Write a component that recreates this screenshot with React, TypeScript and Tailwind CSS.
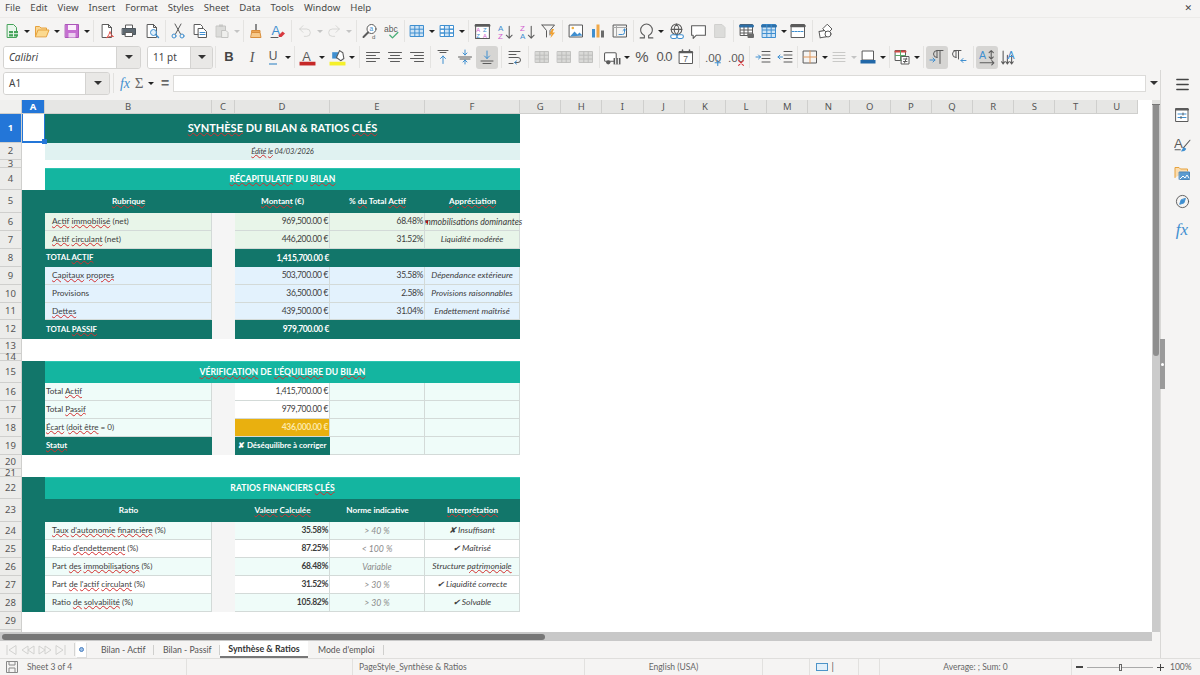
import type { ReactNode } from 'react';
import { Menu, Redo2, Undo2 } from 'lucide-react';

const BLUE = '#3f8fd0';
const DK = '#5b5b5b';
const sortTxt = 'Liberation Sans, sans-serif';

function I({ children, size = 16 }: { children: ReactNode; size?: number }) {
    return (
        <svg width={size} height={size} viewBox="0 0 16 16" fill="none" strokeWidth={1} strokeLinecap="round" strokeLinejoin="round">
            {children}
        </svg>
    );
}

function Btn({ children, on }: { children: ReactNode; on?: boolean }) {
    return (
        <div className={`flex h-[23px] w-[22px] shrink-0 items-center justify-center rounded-[3px] ${on ? 'bg-[#d6d5d3]' : ''}`}>
            {children}
        </div>
    );
}

function Arr({ off }: { off?: boolean }) {
    return (
        <div className="flex w-[8px] shrink-0 justify-center">
            <div className={`h-0 w-0 border-x-[3px] border-t-[3px] border-x-transparent ${off ? 'border-t-[#c4c4c4]' : 'border-t-[#222]'}`} />
        </div>
    );
}

function Sep({ className = 'w-[5px]' }: { className?: string }) {
    return (
        <div className={`flex h-[22px] shrink-0 justify-center ${className}`}>
            <div className="h-full w-px bg-[#e4e3e1]" />
        </div>
    );
}

function Combo({ text, italic, box, drop }: { text: string; italic?: boolean; box: string; drop: string }) {
    return (
        <div className="flex h-[23px] shrink-0 overflow-hidden rounded-[3px] border border-[#d4d3d1]">
            <div className={`flex items-center bg-white pl-[5px] font-['Noto_Sans',sans-serif] text-[10px] text-[#444] ${box} ${italic ? 'italic' : ''}`}>{text}</div>
            <div className={`flex items-center justify-center border-l border-[#d4d3d1] bg-[#e9e8e6] ${drop}`}>
                <div className="h-0 w-0 border-x-[4px] border-t-[4px] border-x-transparent border-t-[#333]" />
            </div>
        </div>
    );
}

const Doc = ({ c = DK, f = 'white' }: { c?: string; f?: string }) => <path d="M3.5 1.5h6l3 3v10h-9z M9.5 1.5v3h3" stroke={c} fill={f} />;
const Table = ({ c = BLUE, f = '#cfe4f5' }: { c?: string; f?: string }) => (
    <>
        <rect x="1.5" y="2.5" width="13" height="11" fill={f} stroke={c} />
        <path d="M1.5 6.2h13M1.5 10h13M5.8 2.5v11M10.2 2.5v11" stroke={c} />
    </>
);
const GreyTable = () => (
    <>
        <rect x="1.5" y="2.5" width="13" height="11" fill="#d9d9d7" stroke="#c2c2c0" />
        <path d="M1.5 6.2h13M1.5 10h13M5.8 2.5v11M10.2 2.5v11" stroke="#bdbdbb" />
    </>
);

function TopBar() {
    return (
        <div className="flex h-[26px] shrink-0 items-center pl-px">
            <Btn><I><path d="M3.5 1.5h6l3 3v10h-9z" stroke="#46a35a" fill="#eaf6ec" /><rect x="5" y="8" width="9" height="5.5" fill="#46a35a" /><path d="M5 10.7h9M9.5 8v5.5" stroke="#eaf6ec" /></I></Btn>
            <Arr />
            <Btn><I><path d="M1.5 13.5v-10h4l1.5 1.5h5.5v2" stroke="#e6a23c" fill="#f9d694" /><path d="M1.5 13.5l2.5-6.5h11l-2.5 6.5z" stroke="#e6a23c" fill="#fbd98f" /></I></Btn>
            <Arr />
            <Btn><I><path d="M1.5 1.5h13v13h-13z" fill="#c66fd2" stroke="#ab55b8" /><rect x="4" y="2" width="8" height="5" fill="#fbeefc" /><rect x="4.5" y="10" width="7" height="4.5" fill="#ecd0ef" /></I></Btn>
            <Arr />
            <Sep />
            <Btn><I><Doc /><path d="M8 14.5c1.5-2 2.5-4 3-6 .5 2 1.5 4 3.5 5-2-.5-4.5 0-6.5 1z" stroke="#e0524a" /></I></Btn>
            <Btn><I><path d="M4.5 5V2h7v3" stroke={DK} fill="#fff" /><path d="M1.5 5.5h13v6h-13z" fill="#5d6870" stroke="#4d565d" /><path d="M4.5 9.5h7v4h-7z" fill="#fff" stroke={DK} /></I></Btn>
            <div className="w-px" />
            <Btn><I><Doc /><circle cx="9.5" cy="9.5" r="3" stroke={BLUE} fill="#e2f0fa" /><path d="M11.8 11.8l2.7 2.7" stroke={BLUE} strokeWidth={1.5} /></I></Btn>
            <Sep className="w-[4px]" />
            <Btn><I><path d="M5 1l5.5 10M11 1L5.5 11" stroke={DK} /><circle cx="4" cy="13" r="2" stroke={BLUE} /><circle cx="12" cy="13" r="2" stroke={BLUE} /></I></Btn>
            <Btn><I><path d="M2.5 1.5h6l2 2v8h-8z" stroke={DK} fill="#fff" /><path d="M6.5 5.5h5l3 3v6h-8z" stroke={DK} fill="#fff" /><path d="M8 9.5h5M8 11.5h5" stroke={BLUE} /></I></Btn>
            <Btn><I><path d="M2.5 3h9v11h-9z" fill="#dcdcda" stroke="#c4c4c2" /><rect x="5" y="1.5" width="4" height="2.5" fill="#c8c8c6" /><path d="M8 7.5h4l2 2v5H8z" fill="#efefed" stroke="#c4c4c2" /></I></Btn>
            <Arr off />
            <Sep className="w-[4px]" />
            <Btn><I><rect x="7" y="1" width="2" height="6" fill="#8a8a8a" /><path d="M4 7.5h8v2H4z" fill="#e9a456" stroke="#d98e3c" /><path d="M4 9.5h8l1 5H3z" fill="#f7c98a" stroke="#d98e3c" /></I></Btn>
            <Btn><I><text x="1.5" y="12" fontSize="13" fontFamily={sortTxt} fill={BLUE}>A</text><path d="M8.5 12.5l4-4 2.5 2-3.5 3.5H9z" fill="#d8393f" /><path d="M1 14.5h7" stroke={DK} /></I></Btn>
            <Sep />
            <Btn><Undo2 size={16} strokeWidth={1.2} color="#cfcfcd" /></Btn>
            <Arr off />
            <div className="-ml-px" />
            <Btn><Redo2 size={16} strokeWidth={1.2} color="#cfcfcd" /></Btn>
            <Arr off />
            <Sep className="w-[6px]" />
            <Btn><I><circle cx="9.5" cy="6" r="4.5" stroke={DK} fill="#fff" /><path d="M6 9.5l-4.5 4.5" stroke={DK} strokeWidth={2} /><text x="7.5" y="8" fontSize="6.5" fontFamily={sortTxt} fill={BLUE}>a</text><text x="10" y="15.5" fontSize="6" fontFamily={sortTxt} fill={DK}>d</text></I></Btn>
            <Btn><I size={17}><text x="0" y="8" fontSize="8" fontFamily={sortTxt} fill={DK}>abc</text><path d="M5.5 11.5l2.5 2.5 5-5" stroke="#4caf7a" strokeWidth={1.3} /></I></Btn>
            <Sep className="w-[3px]" />
            <Btn><I><Table /></I></Btn>
            <Arr />
            <Btn><I><Table f="#ffffff" /><path d="M5.8 2.5h4.4v11H5.8z" fill="#cfe4f5" stroke={BLUE} /><path d="M1.5 6.2h13M1.5 10h13" stroke={BLUE} /></I></Btn>
            <Arr />
            <Sep />
            <Btn><I size={17}><rect x="1.5" y="1.5" width="13" height="13" stroke={DK} fill="#fff" /><path d="M1.5 2.5h13" stroke={DK} strokeWidth={2} /><text x="2" y="8.5" fontSize="5.5" fontFamily={sortTxt} fill="#d05ccf">A</text><text x="8.5" y="8.5" fontSize="5.5" fontFamily={sortTxt} fill={BLUE}>Z</text><text x="2" y="14" fontSize="5.5" fontFamily={sortTxt} fill={BLUE}>Z</text><text x="8.5" y="14" fontSize="5.5" fontFamily={sortTxt} fill="#d05ccf">A</text></I></Btn>
            <div className="w-px" />
            <Btn><I size={17}><text x="1" y="7.5" fontSize="7.5" fontFamily={sortTxt} fill={BLUE}>A</text><text x="1" y="15" fontSize="7.5" fontFamily={sortTxt} fill="#d05ccf">Z</text><path d="M11.5 3v11M8.8 11.5l2.7 2.7 2.7-2.7" stroke={DK} /></I></Btn>
            <Btn><I size={17}><text x="1" y="7.5" fontSize="7.5" fontFamily={sortTxt} fill="#d05ccf">Z</text><text x="1" y="15" fontSize="7.5" fontFamily={sortTxt} fill={BLUE}>A</text><path d="M11.5 3v11M8.8 11.5l2.7 2.7 2.7-2.7" stroke={DK} /></I></Btn>
            <Btn><I><path d="M1 2h12.5L9 7.5V12" stroke={DK} /><path d="M1 2l4.5 5.5V14" stroke={DK} /><path d="M11 6l-2.5 5h2l-1 4 4.5-5.5h-2.5l1.5-3.5z" fill="#f0a030" /></I></Btn>
            <Sep />
            <Btn><I><rect x="1.5" y="2" width="13" height="12" stroke={DK} fill="#fff" /><circle cx="4.8" cy="5" r="1.3" fill="#f0b040" /><path d="M2 13.5l4.5-5 3 3 2-2 3 3z" fill={BLUE} /></I></Btn>
            <Btn><I><rect x="2" y="6" width="3" height="8.5" fill={BLUE} /><rect x="6.5" y="1.5" width="3" height="13" fill="#f0a848" /><rect x="11" y="7.5" width="3" height="7" fill="#6a6a6a" /></I></Btn>
            <Btn><I><rect x="1.5" y="2" width="13" height="12" stroke={DK} fill="#f4f4f3" /><path d="M1.5 4.5h13M4.5 2v12" stroke="#a8a8a8" /><path d="M7 11.5h3.5a2 2 0 0 0 2-2V6M11 7.5l1.5-1.5L14 7.5" stroke={BLUE} /></I></Btn>
            <Sep className="w-[4px]" />
            <Btn><I size={17}><path d="M2 14h4v-2.2C3.8 10.5 2.5 8.5 2.5 6.5a5.5 5.5 0 0 1 11 0c0 2-1.3 4-3.5 5.3V14h4" stroke={DK} /></I></Btn>
            <Arr />
            <Btn><I size={17}><circle cx="8" cy="6" r="5" stroke={DK} /><path d="M3 6h10M8 1c-3 3-3 7 0 10M8 1c3 3 3 7 0 10" stroke={DK} /><rect x="2.5" y="11" width="6" height="3.5" rx="1.7" stroke={BLUE} fill="#fff" /><rect x="8.5" y="11" width="6" height="3.5" rx="1.7" stroke={BLUE} fill="#fff" /></I></Btn>
            <Btn><I size={17}><path d="M1.5 2.5h13v9H6l-3 3v-3H1.5z" stroke={DK} fill="#fff" /></I></Btn>
            <Btn><I><path d="M3 1.5h7l3 3v10H3z" fill="#dcdcda" stroke="#d0d0ce" /></I></Btn>
            <Sep />
            <Btn><I><rect x="1.5" y="1.5" width="12" height="11" fill="#fff" stroke={DK} /><path d="M1.5 3h12" stroke="#2c6fa8" strokeWidth={3} /><path d="M1.5 7h12M1.5 10h12M5 4v8.5M9 4v8.5" stroke={DK} /><rect x="8.5" y="10.5" width="6.5" height="4.5" rx="1" fill="#6b6b6b" /></I></Btn>
            <Btn><I><rect x="1.5" y="1.5" width="13" height="13" fill="#cfe4f5" stroke={BLUE} /><path d="M1.5 3h13" stroke="#2c6fa8" strokeWidth={3} /><path d="M1.5 7h13M1.5 10.5h13M5.8 1.5v13M10.2 1.5v13" stroke={BLUE} /></I></Btn>
            <Arr />
            <div className="-ml-px" />
            <Btn><I><rect x="1.5" y="1.5" width="13" height="13" fill="#fff" stroke={DK} /><path d="M1.5 3h13" stroke={DK} strokeWidth={2.5} /><path d="M2 8.5h12" stroke={BLUE} strokeDasharray="2 1" /></I></Btn>
            <Sep className="w-[6px]" />
            <Btn><I><rect x="1.5" y="8" width="6.5" height="6.5" stroke={DK} fill="#fff" transform="rotate(-10 4 11)" /><path d="M9.5 1.5l4.5 4.5-4.5 4.5L5 6z" stroke={DK} fill="#fff" /><circle cx="10" cy="11" r="3" stroke={DK} fill="#fff" /></I></Btn>
        </div>
    );
}

const AlignIc = ({ a }: { a: 'l' | 'c' | 'r' }) => (
    <I>
        {[3, 6, 9, 12].map((y, i) => {
            const s = i % 2 ? 9 : 13;
            const x = a === 'l' ? 1.5 : a === 'r' ? 14.5 - s : 8 - s / 2;
            return <path key={y} d={`M${x} ${y + 0.5}h${s}`} stroke={DK} />;
        })}
    </I>
);
const DecIc = ({ plus }: { plus?: boolean }) => (
    <I size={17}>
        <text x="0" y="12" fontSize="11" fontFamily={sortTxt} fill={DK}>.00</text>
        {plus ? <path d="M12 10.5v5M9.5 13h5" stroke={BLUE} /> : <path d="M10 11l4.5 4.5M14.5 11L10 15.5" stroke="#d8393f" />}
    </I>
);

function FormatBar() {
    return (
        <div className="flex h-[26px] shrink-0 items-center pl-[3px]">
            <Combo text="Calibri" italic box="w-[112px]" drop="w-[24px]" />
            <div className="w-[6px] shrink-0" />
            <Combo text="11 pt" box="w-[42px]" drop="w-[22px]" />
            <Sep className="w-[5px]" />
            <Btn><span className="font-['Liberation_Sans',sans-serif] text-[13px] font-bold text-[#444]">B</span></Btn>
            <div className="w-px" />
            <Btn><span className="font-['Liberation_Serif',serif] text-[14px] italic text-[#555]">I</span></Btn>
            <div className="-ml-px" />
            <Btn><span className="border-b-2 border-[#8db8da] font-['Liberation_Sans',sans-serif] text-[12px] leading-[13px] text-[#555]">U</span></Btn>
            <Arr />
            <Sep className="w-[4px]" />
            <Btn><I size={17}><text x="3" y="11" fontSize="12" fontFamily={sortTxt} fill={DK}>A</text><rect x="0.5" y="12" width="15" height="3.5" fill="#c62828" /></I></Btn>
            <Arr />
            <Btn><I size={17}><path d="M3 3h8v6H3z" fill="#3f8fd0" /><path d="M7 8l3-6.5 3 2 1 5.5-3 2z" fill="#fff" stroke={DK} /><rect x="0.5" y="12" width="15" height="3.5" fill="#f5f02a" /></I></Btn>
            <Arr />
            <Sep className="w-[6px]" />
            <Btn><AlignIc a="l" /></Btn>
            <Btn><AlignIc a="c" /></Btn>
            <Btn><AlignIc a="r" /></Btn>
            <Sep className="w-[4px]" />
            <Btn><I><path d="M3 1.5h10M5 3.5h6" stroke={DK} /><path d="M8 14.5V7M5.5 9.5L8 7l2.5 2.5" stroke={BLUE} /></I></Btn>
            <Btn><I><path d="M1.5 8h13M3 10h10" stroke={DK} /><path d="M8 1v5M6 4l2 2 2-2M8 15v-4M6 13l2-2 2 2" stroke={BLUE} /></I></Btn>
            <Btn on><I><path d="M2 12h12M4 14.5h8" stroke={DK} /><path d="M8 2v7.5M5.5 7L8 9.5 10.5 7" stroke={BLUE} /></I></Btn>
            <Sep className="w-[6px]" />
            <Btn><I><path d="M2 2.5h11M2 5.5h7M2 8.5h9a2.5 2.5 0 0 1 0 5H8M2 14.5h4" stroke={DK} /><path d="M9.5 12l-2 1.5 2 1.5" stroke={BLUE} /></I></Btn>
            <Sep className="w-[5px]" />
            <Btn><I><GreyTable /></I></Btn>
            <Btn><I><GreyTable /></I></Btn>
            <Btn><I><GreyTable /></I></Btn>
            <Sep className="w-[4px]" />
            <Btn><I size={17}><rect x="0.5" y="3.5" width="11" height="8" rx="1" stroke={DK} fill="#fff" /><circle cx="4" cy="12.5" r="2" fill={DK} /><rect x="9" y="8.5" width="6.5" height="6" fill={DK} /><path d="M11 9v5M13.5 9v5" stroke="#fff" /></I></Btn>
            <Arr />
            <Btn><span className="font-['Liberation_Sans',sans-serif] text-[15px] text-[#555]">%</span></Btn>
            <Btn><span className="font-['Liberation_Sans',sans-serif] text-[13px] tracking-[-1px] text-[#555]">0.0</span></Btn>
            <Btn><I><rect x="1.5" y="2.5" width="13" height="12" stroke={DK} fill="#fff" /><path d="M1.5 3.5h13M4.5 1v2M11.5 1v2" stroke={DK} strokeWidth={1.5} /><text x="5.3" y="13" fontSize="8.5" fontFamily={sortTxt} fill={DK}>7</text></I></Btn>
            <Sep className="w-[5px]" />
            <Btn><DecIc plus /></Btn>
            <div className="w-px" />
            <Btn><DecIc /></Btn>
            <Sep className="w-[5px]" />
            <Btn><I><path d="M7 2.5h8M7 6h8M7 9.5h8M7 13h8" stroke={DK} /><path d="M1 8h4.5M3.5 6l2 2-2 2" stroke={BLUE} /></I></Btn>
            <Btn><I><path d="M7 2.5h8M7 6h8M7 9.5h8M7 13h8" stroke={DK} /><path d="M5.5 8H1M3 6L1 8l2 2" stroke={BLUE} /></I></Btn>
            <Sep className="w-[3px]" />
            <Btn><I><rect x="1.5" y="2" width="13" height="12" stroke={DK} /><path d="M8 2v12M1.5 8h13" stroke="#e0975a" /></I></Btn>
            <Arr />
            <div className="-ml-px" />
            <Btn><I><path d="M2 3.5h12M2 6.5h12M2 9.5h12M2 12.5h12" stroke="#c9c9c7" /></I></Btn>
            <Arr off />
            <div className="-ml-px" />
            <Btn><I><rect x="2.5" y="2" width="11" height="9" stroke={DK} fill="#fff" /><rect x="0.5" y="11" width="15" height="3.5" fill="#2268a8" /></I></Btn>
            <Arr />
            <Sep className="w-[4px]" />
            <Btn><I><rect x="1.5" y="1.5" width="10" height="10" fill="#fff" stroke={DK} /><path d="M1.5 2.5h10" stroke="#d04a45" strokeWidth={2} /><path d="M1.5 6.5h10M6.5 1.5v10" stroke="#5aa868" /><rect x="7.5" y="7.5" width="7.5" height="7.5" fill="#fff" stroke={DK} /><path d="M9.5 10h3.5M9.5 12.5h3.5M12.5 9l-2 5" stroke={DK} /></I></Btn>
            <Arr />
            <Sep className="w-[5px]" />
            <Btn on><I><path d="M8 8.5v-7M11 14.5v-13M8 1.5h6M8 8.5a3.5 3.5 0 0 1 0-7" stroke={DK} /><path d="M1 11h5M4 9l2 2-2 2" stroke={BLUE} /></I></Btn>
            <Btn><I><path d="M5 8.5v-7M7.5 10V1.5M3 1.5h7M5 8.5a3.5 3.5 0 0 1 0-7" stroke={DK} /><path d="M15 11.5h-5M12 9.5l-2 2 2 2" stroke={BLUE} /></I></Btn>
            <Sep className="w-[6px]" />
            <Btn on><I size={17}><text x="0" y="9" fontSize="10" fontFamily={sortTxt} fill={BLUE}>A</text><path d="M11.5 1.5v8M9.5 3.5l2-2 2 2M9.5 7.5l2 2 2-2" stroke={DK} /><path d="M1 13h13M12 11l2 2-2 2" stroke={DK} /></I></Btn>
            <Btn><I size={17}><path d="M2 2v12M6 6v8M10 6v8M.5 12l1.5 2 1.5-2M4.5 12L6 14l1.5-2M8.5 12l1.5 2 1.5-2" stroke={DK} /><text x="6" y="9" fontSize="10" fontFamily={sortTxt} fill={BLUE}>A</text></I></Btn>
        </div>
    );
}

function Sp({ children }: { children: ReactNode }) {
    return <span className="underline decoration-[#d32f2f] decoration-wavy decoration-1 underline-offset-0">{children}</span>;
}

const COLS: [string, string][] = [
    ['A', 'w-[23px]'], ['B', 'w-[167px]'], ['C', 'w-[23px]'], ['D', 'w-[95px]'], ['E', 'w-[95px]'], ['F', 'w-[95px]'],
    ...'GHIJKLMNOPQRSTU'.split('').map((l): [string, string] => [l, 'w-[41.2px]']),
];

const HEAD = "font-['Noto_Sans',sans-serif] text-[9.5px] text-[#555]";

function ColHeader() {
    return (
        <div className="flex h-[14px] shrink-0">
            <div className="w-[22px] shrink-0 border-r border-b border-[#cfcfcd] bg-[#f0f0ee]" />
            {COLS.map(([l, w]) => (
                <div key={l} className={`flex shrink-0 items-center justify-center border-r border-b border-[#cfcfcd] leading-none ${HEAD} ${w} ${l === 'A' ? 'bg-[#2376d8] font-bold text-white' : 'bg-[#e6e6e4]'}`}>
                    {l}
                </div>
            ))}
        </div>
    );
}

function Row({ n, h, children, active }: { n: number; h: string; children?: ReactNode; active?: boolean }) {
    return (
        <div className={`flex shrink-0 ${h}`}>
            <div className={`flex w-[22px] shrink-0 items-center justify-center border-r border-b border-[#cfcfcd] leading-none ${HEAD} ${active ? 'bg-[#2376d8] font-bold text-white' : 'bg-[#ececea]'}`}>
                {n}
            </div>
            {children}
        </div>
    );
}

const DARK = 'bg-[#12766a] text-white font-bold';
const TEAL = 'bg-[#14b5a0] text-white font-bold';
const LINE = 'border-r border-b border-[#d3dad8]';
const GREY = 'bg-[#f5f5f5]';

const NUM = 'text-[8.5px] tracking-[-0.35px]';
const BANNER = 'text-[8.6px]';
const TH = 'text-[8.2px]';
const SIDE = 'text-[7.8px]';
const NOTE = 'text-[8.5px]';

function Cell({ w, t = 'text-[8.3px]', className = '', children }: { w: string; t?: string; className?: string; children?: ReactNode }) {
    return (
        <div className={`flex shrink-0 items-center overflow-hidden whitespace-nowrap font-['Lato',sans-serif] text-[#3d3d3d] ${t} ${w} ${className}`}>
            {children}
        </div>
    );
}

const A = 'w-[23px]';
const B = 'w-[167px]';
const C = 'w-[23px]';
const D = 'w-[95px]';
const E = 'w-[95px]';
const F = 'w-[95px]';
const ALL = 'w-[475px]';

const R = 'justify-end pr-px';
const M = 'justify-center';

function HeaderRow({ n, labels }: { n: number; labels: ReactNode[] }) {
    return (
        <Row n={n} h="h-[23px]">
            <Cell w={A} className={DARK} />
            <Cell w={B} t={TH} className={`${DARK} ${M}`}>{labels[0]}</Cell>
            <Cell w={C} className={DARK} />
            <Cell w={D} t={TH} className={`${DARK} ${M}`}>{labels[1]}</Cell>
            <Cell w={E} t={TH} className={`${DARK} ${M}`}>{labels[2]}</Cell>
            <Cell w={F} t={TH} className={`${DARK} ${M}`}>{labels[3]}</Cell>
        </Row>
    );
}

function Banner({ n, label, side }: { n: number; label: ReactNode; side?: boolean }) {
    return (
        <Row n={n} h="h-[22px]">
            <Cell w={A} className={side ? DARK : ''} />
            <Cell w={ALL} t={BANNER} className={`${TEAL} ${M} border-t border-[#2cc4b0]`}>{label}</Cell>
        </Row>
    );
}

function TotalRow({ n, h, label, value }: { n: number; h: string; label: ReactNode; value: string }) {
    return (
        <Row n={n} h={h}>
            <Cell w={A} className={DARK} />
            <Cell w={B} t={SIDE} className={`${DARK} pl-px`}>{label}</Cell>
            <Cell w={C} className={GREY} />
            <Cell w={D} t={NUM} className={`${DARK} ${R}`}>{value}</Cell>
            <Cell w={E} className={DARK} />
            <Cell w={F} className={DARK} />
        </Row>
    );
}

function Line({ n, h, bg, label, d, e, f, clip }: { n: number; h: string; bg: string; label: ReactNode; d: string; e: string; f: string; clip?: boolean }) {
    return (
        <Row n={n} h={h}>
            <Cell w={A} className={DARK} />
            <Cell w={B} className={`${bg} ${LINE} pl-[7px]`}>{label}</Cell>
            <Cell w={C} className={GREY} />
            <Cell w={D} t={NUM} className={`${bg} ${LINE} ${R}`}>{d}</Cell>
            <Cell w={E} t={NUM} className={`${bg} ${LINE} ${R}`}>{e}</Cell>
            {clip ? (
                <div className={`relative ${F} shrink-0 ${bg} ${LINE}`}>
                    <div className="flex h-full justify-center overflow-visible [clip-path:inset(0_-10px_0_0)]">
                        <span className="flex items-center whitespace-nowrap font-['Lato',sans-serif] text-[8.7px] italic text-[#3d3d3d]">{f}</span>
                    </div>
                    <div className="absolute top-[7px] left-0 h-0 w-0 border-y-[2px] border-r-[3px] border-y-transparent border-r-[#b01010]" />
                </div>
            ) : (
                <Cell w={F} t={NOTE} className={`${bg} ${LINE} ${M} italic`}>{f}</Cell>
            )}
        </Row>
    );
}

function CheckRow({ n, label, value, orange }: { n: number; label: ReactNode; value: string; orange?: boolean }) {
    return (
        <Row n={n} h="h-[18px]">
            <Cell w={A} className={DARK} />
            <Cell w={B} t="text-[8.1px]" className={`bg-[#effcf9] ${LINE} pl-px`}>{label}</Cell>
            <Cell w={C} className={GREY} />
            <Cell w={D} t={NUM} className={`${LINE} ${R} ${orange ? 'bg-[#e9b00f] font-bold !text-[#fde9a8]' : 'bg-white'}`}>{value}</Cell>
            <Cell w={E} className={`bg-[#effcf9] ${LINE}`} />
            <Cell w={F} className={`bg-[#effcf9] ${LINE}`} />
        </Row>
    );
}

function RatioRow({ n, bg, label, d, e, f }: { n: number; bg: string; label: ReactNode; d: string; e: string; f: ReactNode }) {
    return (
        <Row n={n} h="h-[18px]">
            <Cell w={A} className={DARK} />
            <Cell w={B} t="text-[8.2px]" className={`${bg} ${LINE} pl-[7px]`}>{label}</Cell>
            <Cell w={C} className={GREY} />
            <Cell w={D} t={NUM} className={`${bg} ${LINE} ${R} font-bold`}>{d}</Cell>
            <Cell w={E} t="text-[8.7px]" className={`${bg} ${LINE} ${M} italic !text-[#8c8c8c]`}>{e}</Cell>
            <Cell w={F} t={NOTE} className={`${bg} ${LINE} ${M} italic`}>{f}</Cell>
        </Row>
    );
}

const GREEN = 'bg-[#e8f5e9]';
const SKY = 'bg-[#e3f2fd]';
const MINT = 'bg-[#effcf9]';

function Sheet() {
    return (
        <div className="w-[1152px] shrink-0 overflow-hidden bg-white">
            <ColHeader />
            <Row n={1} h="h-[29px]" active>
                <div className={`relative ${A} shrink-0 border-x border-b-2 border-[#2376d8] bg-white`}>
                    <div className="absolute -right-[3px] -bottom-[3px] h-[5px] w-[5px] bg-[#2376d8]" />
                </div>
                <Cell w={ALL} t="text-[11px]" className={`${DARK} ${M}`}>
                    <span><Sp>SYNTHÈSE</Sp> DU BILAN &amp; RATIOS <Sp>CLÉS</Sp></span>
                </Cell>
            </Row>
            <Row n={2} h="h-[17px]">
                <Cell w={A} />
                <Cell w={ALL} t="text-[7.5px] tracking-[-0.15px]" className={`bg-[#e0f2f1] ${M} italic`}>
                    <span><Sp>Édité</Sp> <Sp>le</Sp> 04/03/2026</span>
                </Cell>
            </Row>
            <Row n={3} h="h-[8px]" />
            <Banner n={4} label={<span><Sp>RÉCAPITULATIF</Sp> DU <Sp>BILAN</Sp></span>} />
            <HeaderRow n={5} labels={[<Sp>Rubrique</Sp>, <span><Sp>Montant</Sp> (€)</span>, <span>% <Sp>du</Sp> Total <Sp>Actif</Sp></span>, <Sp>Appréciation</Sp>]} />
            <Line n={6} h="h-[18px]" bg={GREEN} label={<span><Sp>Actif</Sp> <Sp>immobilisé</Sp> (net)</span>} d="969,500.00 €" e="68.48%" f="Immobilisations dominantes" clip />
            <Line n={7} h="h-[18px]" bg={GREEN} label={<span><Sp>Actif</Sp> <Sp>circulant</Sp> (net)</span>} d="446,200.00 €" e="31.52%" f="Liquidité modérée" />
            <TotalRow n={8} h="h-[18px]" label={<span>TOTAL <Sp>ACTIF</Sp></span>} value="1,415,700.00 €" />
            <Line n={9} h="h-[18px]" bg={SKY} label={<span><Sp>Capitaux</Sp> <Sp>propres</Sp></span>} d="503,700.00 €" e="35.58%" f="Dépendance extérieure" />
            <Line n={10} h="h-[18px]" bg={SKY} label="Provisions" d="36,500.00 €" e="2.58%" f="Provisions raisonnables" />
            <Line n={11} h="h-[17px]" bg={SKY} label={<Sp>Dettes</Sp>} d="439,500.00 €" e="31.04%" f="Endettement maîtrisé" />
            <TotalRow n={12} h="h-[19px]" label={<span>TOTAL <Sp>PASSIF</Sp></span>} value="979,700.00 €" />
            <Row n={13} h="h-[15px]" />
            <Row n={14} h="h-[7px]" />
            <Banner n={15} side label={<span><Sp>VÉRIFICATION</Sp> DE <Sp>L'ÉQUILIBRE</Sp> DU <Sp>BILAN</Sp></span>} />
            <CheckRow n={16} label={<span>Total <Sp>Actif</Sp></span>} value="1,415,700.00 €" />
            <CheckRow n={17} label={<span>Total <Sp>Passif</Sp></span>} value="979,700.00 €" />
            <CheckRow n={18} label={<span><Sp>Écart</Sp> (<Sp>doit être</Sp> = 0)</span>} value="436,000.00 €" orange />
            <Row n={19} h="h-[18px]">
                <Cell w={A} className={DARK} />
                <Cell w={B} t={SIDE} className={`${DARK} pl-px`}><Sp>Statut</Sp></Cell>
                <Cell w={C} className={GREY} />
                <Cell w={D} t="text-[7.9px]" className={`${DARK} pl-[3px]`}>✘ Déséquilibre à corriger</Cell>
                <Cell w={E} className={`bg-[#effcf9] ${LINE}`} />
                <Cell w={F} className={`bg-[#effcf9] ${LINE}`} />
            </Row>
            <Row n={20} h="h-[14px]" />
            <Row n={21} h="h-[8px]" />
            <Banner n={22} side label={<span>RATIOS FINANCIERS <Sp>CLÉS</Sp></span>} />
            <HeaderRow n={23} labels={['Ratio', <span><Sp>Valeur</Sp> <Sp>Calculée</Sp></span>, 'Norme indicative', <Sp>Interprétation</Sp>]} />
            <RatioRow n={24} bg={MINT} label={<span><Sp>Taux</Sp> <Sp>d'autonomie</Sp> <Sp>financière</Sp> (%)</span>} d="35.58%" e="> 40 %" f="✘ Insuffisant" />
            <RatioRow n={25} bg="bg-white" label={<span>Ratio <Sp>d'endettement</Sp> (%)</span>} d="87.25%" e="< 100 %" f="✔ Maîtrisé" />
            <RatioRow n={26} bg={MINT} label={<span>Part <Sp>des</Sp> <Sp>immobilisations</Sp> (%)</span>} d="68.48%" e="Variable" f={<span>Structure <Sp>patrimoniale</Sp></span>} />
            <RatioRow n={27} bg="bg-white" label={<span>Part <Sp>de</Sp> <Sp>l'actif</Sp> <Sp>circulant</Sp> (%)</span>} d="31.52%" e="> 30 %" f="✔ Liquidité correcte" />
            <RatioRow n={28} bg={MINT} label={<span>Ratio <Sp>de</Sp> <Sp>solvabilité</Sp> (%)</span>} d="105.82%" e="> 30 %" f="✔ Solvable" />
            <Row n={29} h="h-[18px]" />
            <Row n={30} h="h-[18px]" />
        </div>
    );
}

function Tabs() {
    const tab = "font-['Lato',sans-serif] text-[8.7px] text-[#555]";
    return (
        <div className="flex h-[17px] shrink-0 items-center bg-[#f5f4f3]">
            <div className="flex w-[74px] shrink-0 items-center pl-[6px]">
                <svg width="60" height="12" viewBox="0 0 60 12" fill="none" stroke="#d2d2d0">
                    <path d="M1 1v10M10 1.5L3 6l7 4.5zM22 2l-6 4 6 4zM28 2l-6 4 6 4zM33 2l6 4-6 4zM39 2l6 4-6 4zM50 1.5L57 6l-7 4.5zM59 1v10" />
                </svg>
            </div>
            <div className="h-[13px] w-px bg-[#d4d4d2]" />
            <div className="ml-px flex h-[15px] w-[10px] items-center justify-center bg-white shadow-[1px_1px_0_#ddd]">
                <div className="h-[5px] w-[5px] rounded-full border border-[#4a7fc0] bg-[#9cc0e8]" />
            </div>
            <div className={`${tab} ml-[15px] w-[52px] whitespace-nowrap`}>Bilan - Actif</div>
            <div className="h-[10px] w-px bg-[#cfcfcd]" />
            <div className={`${tab} ml-[9px] w-[56px] whitespace-nowrap`}>Bilan - Passif</div>
            <div className="h-[10px] w-px bg-[#cfcfcd]" />
            <div className="flex h-full w-[88px] items-center justify-center whitespace-nowrap border-b-2 border-[#777] bg-white font-['Lato',sans-serif] text-[8.9px] font-bold text-[#333]">Synthèse &amp; Ratios</div>
            <div className={`${tab} ml-[10px] w-[65px] whitespace-nowrap`}>Mode d'emploi</div>
            <div className="h-[10px] w-px bg-[#cfcfcd]" />
        </div>
    );
}

function StatusBar() {
    const t = "flex h-full shrink-0 items-center border-r border-[#e2e1df] font-['Lato',sans-serif] text-[8.5px] text-[#666] whitespace-nowrap";
    return (
        <div className="flex h-[17px] shrink-0 border-t border-[#dfdedc] bg-[#f5f4f3]">
            <div className={`${t} w-[187px] pl-[6px]`}>
                <svg width="12" height="12" viewBox="0 0 12 12" fill="none" stroke="#888" className="mr-[9px]">
                    <path d="M.5.5h11v11H.5z M3 .5V4h6V.5M3 11.5V7h6v4.5" />
                </svg>
                Sheet 3 of 4
            </div>
            <div className={`${t} w-[166px]`} />
            <div className={`${t} w-[232px] pl-[6px]`}>PageStyle_Synthèse &amp; Ratios</div>
            <div className={`${t} w-[178px] justify-center`}>English (USA)</div>
            <div className={`${t} w-[47px]`} />
            <div className={`${t} w-[49px] pl-[6px]`}>
                <div className="h-[8px] w-[12px] border border-[#4d94c8] bg-[#e2f0fa]" />
                <div className="ml-[3px] text-[13px] font-light leading-none text-[#555]">I</div>
            </div>
            <div className={`${t} w-[21px]`} />
            <div className={`${t} w-[192px] justify-center`}>Average: ; Sum: 0</div>
            <div className="flex h-full items-center pl-[4px]">
                <div className="h-[1.5px] w-[7px] bg-[#444]" />
                <div className="relative mx-[4px] h-px w-[66px] bg-[#aaa]">
                    <div className="absolute -top-[3px] left-[32px] h-[7px] w-[3px] border border-[#666] bg-[#f5f4f3]" />
                </div>
                <div className="relative h-[7px] w-[7px]">
                    <div className="absolute top-[3px] h-px w-[7px] bg-[#444]" />
                    <div className="absolute left-[3px] h-[7px] w-px bg-[#444]" />
                </div>
                <div className="ml-[6px] font-['Lato',sans-serif] text-[8.5px] text-[#666]">100%</div>
            </div>
        </div>
    );
}

export default function App() {
    const menus = ['File', 'Edit', 'View', 'Insert', 'Format', 'Styles', 'Sheet', 'Data', 'Tools', 'Window', 'Help'];
    return (
        <div className="flex h-[675px] w-[1200px] flex-col overflow-hidden bg-[#f5f4f3]">
            <div className="flex h-[18px] shrink-0 items-center justify-between border-b border-[#ecebe9] pr-[8px] pl-[5px]">
                <div className="flex gap-[10px] font-['Noto_Sans',sans-serif] text-[9.6px] text-[#4a4a4a]">
                    {menus.map((m) => (
                        <span key={m}>{m}</span>
                    ))}
                </div>
                <span className="font-['DejaVu_Sans',sans-serif] text-[9px] font-bold text-[#444]">✕</span>
            </div>
            <TopBar />
            <FormatBar />
            <div className="flex h-[588px] shrink-0">
                <div className="flex w-[1161px] shrink-0 flex-col border-r border-[#d9d8d6]">
                    <div className="flex h-[30px] shrink-0 items-center pb-[4px] pl-[3px]">
                        <Combo text="A1" box="w-[81px]" drop="w-[24px]" />
                        <div className="ml-[3px] h-[20px] w-px bg-[#e2e1df]" />
                        <Btn><span className="font-['Liberation_Serif',serif] text-[14px] italic text-[#3f8fd0]">fx</span></Btn>
                        <div className="-ml-[6px] w-[18px] text-center font-['Liberation_Serif',serif] text-[15px] text-[#666]">Σ</div>
                        <div className="-ml-[1px]"><Arr /></div>
                        <div className="ml-[3px] w-[14px] text-center font-['Liberation_Sans',sans-serif] text-[14px] font-bold leading-none text-[#666]">=</div>
                        <div className="ml-[1px] h-[17px] w-[973px] border border-[#dcdbd9] bg-white" />
                        <div className="ml-[1px] flex w-[13px] justify-center">
                            <div className="h-0 w-0 border-x-[4px] border-t-[4px] border-x-transparent border-t-[#333]" />
                        </div>
                    </div>
                    <div className="flex h-[532px] shrink-0">
                        <Sheet />
                        <div className="flex w-[8px] flex-col bg-[#cbcbcb]">
                            <div className="h-[5px] border-b border-[#777] bg-[#e3e3e1]" />
                            <div className="mx-auto h-[251px] w-[6px] rounded-b-[3px] bg-[#8e8e8e]" />
                        </div>
                    </div>
                    <div className="flex h-[9px] w-[1152px] shrink-0 items-center bg-[#c8c8c8]">
                        <div className="ml-[2px] h-[6px] w-[543px] rounded-[3px] bg-[#767676]" />
                    </div>
                    <Tabs />
                </div>
                <div className="relative flex flex-1 flex-col items-center">
                    <div className="absolute top-[269px] -left-px h-[50px] w-[5px] bg-[#9a9a9a]">
                        <div className="absolute top-[24px] left-[1px] h-[3px] w-[3px] rounded-full bg-white" />
                    </div>
                    <div className="mt-[6px] pl-[3px]"><Menu size={17} color="#444" strokeWidth={2} /></div>
                    <div className="mt-[14px] pl-[3px]">
                        <I size={16}><rect x="2" y="1.5" width="12" height="13" fill="#fff" stroke={DK} /><path d="M2 2.5h12" stroke={DK} strokeWidth={2} /><path d="M4 7h8M4 10.5h8" stroke={BLUE} /><path d="M9 6v2M7 9.5v2" stroke={DK} /></I>
                    </div>
                    <div className="mt-[13px] pl-[3px]">
                        <I size={17}><text x="0" y="11" fontSize="12.5" fontFamily={sortTxt} fill={DK}>A</text><path d="M15 4l-6 7" stroke={DK} /><path d="M9.5 10.5l2 1.5c-.5 2-2.5 2.5-5 2.5 1-1 1-3 3-4z" fill={BLUE} /><path d="M1 13h5" stroke={DK} /></I>
                    </div>
                    <div className="mt-[12px] pl-[3px]">
                        <I size={16}><path d="M1 12.5v-10h4l1.5 1.5h7v2" stroke="#e6a23c" fill="#fbdcae" /><rect x="5.5" y="7" width="10" height="7.5" fill="#5b9bd0" stroke="#4a86ba" /><path d="M6 14l3-3 2 2 2-3 2 3" stroke="#fff" /></I>
                    </div>
                    <div className="mt-[13px] pl-[3px]">
                        <I size={15}><circle cx="8" cy="8" r="6.5" stroke={DK} /><path d="M11 5L9.5 9.5 5 11l1.5-4.5z" fill={BLUE} stroke={BLUE} /></I>
                    </div>
                    <div className="mt-[12px] pl-[3px] font-['Liberation_Serif',serif] text-[17px] italic leading-none text-[#3f8fd0]">fx</div>
                </div>
            </div>
            <StatusBar />
        </div>
    );
}
